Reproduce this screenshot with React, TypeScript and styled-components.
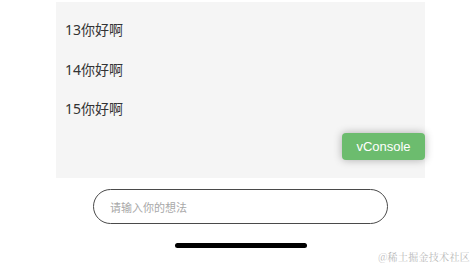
import styled, { createGlobalStyle } from "styled-components";

const GlobalStyle = createGlobalStyle`
  html, body {
    margin: 0;
    padding: 0;
    background: #ffffff;
  }
  body {
    font-family: "Noto Sans", "Noto Sans CJK SC", sans-serif;
  }
`;

const Page = styled.div`
  position: relative;
  width: 474px;
  height: 266px;
  overflow: hidden;
  background: #fff;
`;

const Panel = styled.div`
  margin: 2px 0 0 56px;
  width: 369px;
  height: 176px;
  background: #f5f5f5;
  box-sizing: border-box;
  padding: 18px 0 0 9px;
  display: flex;
  flex-direction: column;
  gap: 19.5px;
`;

const Row = styled.div`
  font-family: "Noto Sans", "Noto Sans CJK SC", sans-serif;
  font-size: 14px;
  line-height: 20px;
  height: 20px;
  color: #333;
`;

const VConsoleBtn = styled.div`
  position: absolute;
  left: 342px;
  top: 133px;
  width: 83px;
  height: 27px;
  border-radius: 4px;
  background: #6cbc6e;
  color: #fff;
  font-family: "Liberation Sans", Arial, sans-serif;
  font-size: 13px;
  display: flex;
  align-items: center;
  justify-content: center;
  box-shadow: 0 0 8px rgba(0, 0, 0, 0.3);
`;

const InputBar = styled.div`
  display: flex;
  justify-content: center;
  padding-left: 7px;
  margin-top: 11px;
`;

const Input = styled.input`
  width: 295px;
  height: 35px;
  box-sizing: border-box;
  border: 1.5px solid #4a4a4a;
  border-radius: 18px;
  padding: 0 16px;
  font-family: "Noto Sans CJK SC", sans-serif;
  font-size: 11px;
  outline: none;
  background: #fff;
  &::placeholder {
    color: #a8a8a8;
  }
`;

const HomeIndicator = styled.div`
  margin: 19px 0 0 175px;
  width: 132px;
  height: 5px;
  border-radius: 3px;
  background: #000;
`;

const Watermark = styled.div`
  position: absolute;
  right: 4px;
  bottom: 2px;
  font-family: "Noto Serif CJK SC", "Liberation Serif", serif;
  font-size: 10px;
  color: #b9b9b9;
  letter-spacing: 0.3px;
`;

const items = ["13你好啊", "14你好啊", "15你好啊"];

export default function App() {
  return (
    <Page>
      <GlobalStyle />
      <Panel>
        {items.map((t) => (
          <Row key={t}>{t}</Row>
        ))}
      </Panel>
      <VConsoleBtn>vConsole</VConsoleBtn>
      <InputBar>
        <Input placeholder="请输入你的想法" />
      </InputBar>
      <HomeIndicator />
      <Watermark>@稀土掘金技术社区</Watermark>
    </Page>
  );
}
